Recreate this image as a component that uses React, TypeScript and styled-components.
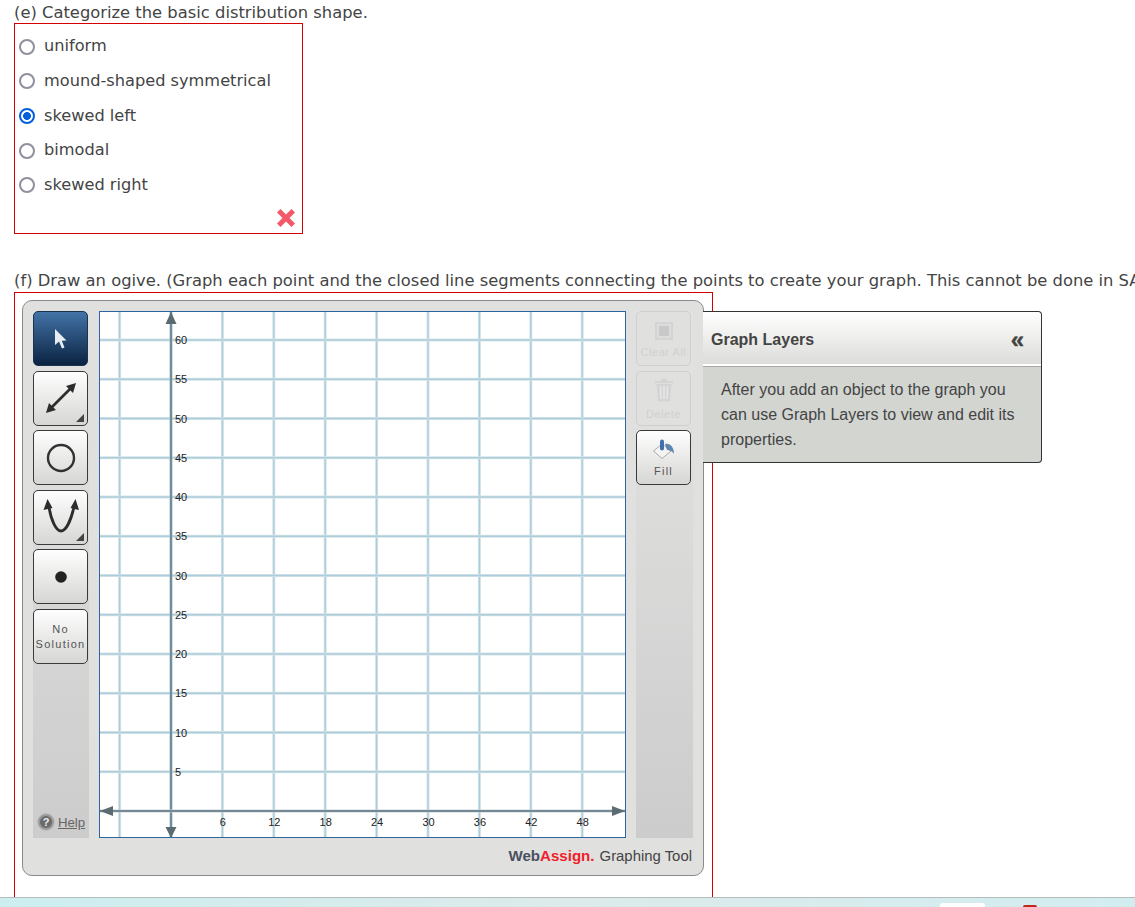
import React from 'react';
import styled, {createGlobalStyle} from 'styled-components';

const GlobalStyle = createGlobalStyle`
    html, body {
        margin: 0;
        padding: 0;
        height: 907px;
        overflow: hidden;
        background: #fff;
    }
`;

const Page = styled.div`
    width: 1135px;
    height: 907px;
    overflow: hidden;
    display: flex;
    flex-direction: column;
    font-family: 'DejaVu Sans', Verdana, sans-serif;
    color: #444;
`;

const Content = styled.div`
    flex: 1;
    min-height: 0;
    padding: 2px 0 0 14px;
    overflow: hidden;
`;

const Question = styled.div`
    font-size: 16.35px;
    line-height: 21px;
    white-space: nowrap;
`;

const ChoiceBox = styled.div`
    box-sizing: border-box;
    width: 289px;
    height: 211px;
    margin-bottom: 36px;
    border: 1px solid #d40000;
    padding: 4.3px 7px 7px 4px;
    display: flex;
    flex-direction: column;
`;

const Choice = styled.label`
    flex: none;
    height: 34.7px;
    display: flex;
    align-items: center;
    gap: 9px;
    font-size: 16.2px;
`;

const Radio = styled.input`
    appearance: none;
    flex: none;
    width: 16px;
    height: 16px;
    margin: 2px 0 0;
    border: 2px solid #8f8f9d;
    border-radius: 50%;
    background: #fff;

    &:checked {
        border-color: #0060df;
        background: radial-gradient(circle, #0060df 0 3.6px, #fff 4.2px);
    }
`;

const WrongMark = styled.svg`
    flex: none;
    align-self: flex-end;
    margin-top: 7px;
`;

const GraphBox = styled.div`
    box-sizing: border-box;
    width: 699px;
    height: 605px;
    margin-top: 1px;
    border: 1px solid #d40000;
    border-bottom: none;
    padding: 7px 0 0 7px;
    display: flex;
    align-items: flex-start;
`;

const Tool = styled.div`
    flex: none;
    box-sizing: border-box;
    width: 682px;
    height: 576px;
    border: 1px solid #8b8b8b;
    border-radius: 10px;
    background: #e0e0df;
    padding: 10px 10px 0;
`;

const ToolBody = styled.div`
    display: flex;
    gap: 10px;
`;

const SideColumn = styled.div<{$wide?: boolean}>`
    width: ${(props) => (props.$wide ? '57px' : '56px')};
    height: 527px;
    display: flex;
    flex-direction: column;
    gap: 4.6px;
    background: linear-gradient(#e2e2e1 0%, #e0e0df 20%, #cccccc 100%);
`;

const ToolButton = styled.div<{$active?: boolean; $off?: boolean; $top?: number}>`
    box-sizing: border-box;
    width: 55px;
    height: 55px;
    flex: none;
    position: relative;
    border-radius: 5px;
    border: 1px solid ${(props) => (props.$off ? '#cfcfcf' : props.$active ? '#1c3350' : '#3a3a3a')};
    background: ${(props) => (props.$off ? '#e0e0df' : props.$active ? 'linear-gradient(#4373a8, #0a2342)' : 'linear-gradient(#fefefe, #d6d6d4)')};
    padding-top: ${(props) => (props.$top === undefined ? 0 : `${props.$top}px`)};
    display: flex;
    flex-direction: column;
    align-items: center;
    justify-content: ${(props) => (props.$top === undefined ? 'center' : 'flex-start')};
    gap: ${(props) => (props.$top === undefined ? 0 : '5px')};
`;

const ButtonLabel = styled.div<{$off?: boolean}>`
    font-family: 'Liberation Sans', Arial, sans-serif;
    font-size: 11px;
    line-height: 15px;
    letter-spacing: ${(props) => (props.$off ? '0.55px' : '1.25px')};
    text-align: center;
    white-space: nowrap;
    color: ${(props) => (props.$off ? '#d0d0d0' : '#555')};
`;

const SolutionLabels = styled.div`
    margin-top: 2px;
`;

const Corner = styled.span`
    position: absolute;
    right: 3px;
    bottom: 3px;
    width: 0;
    height: 0;
    border-left: 8px solid transparent;
    border-bottom: 8px solid #444;
`;

const HelpRow = styled.div`
    margin-top: auto;
    height: 32px;
    padding-left: 4px;
    display: flex;
    align-items: center;
    gap: 3px;
    font-family: 'Liberation Sans', Arial, sans-serif;
    font-size: 13.2px;
    color: #666;
    text-decoration: underline;
`;

const Canvas = styled.div`
    box-sizing: border-box;
    width: 527px;
    height: 527px;
    border: 1px solid #2f659f;
    background: #fff;
`;

const Brand = styled.div`
    height: 35px;
    display: flex;
    justify-content: flex-end;
    align-items: center;
    padding-right: 1px;
    font-family: 'Liberation Sans', Arial, sans-serif;
    font-size: 14.9px;
    color: #444;
`;

const BrandName = styled.b`
    margin-right: 5px;
    font-size: 15.1px;
    color: #4a4f60;

    & > span {
        color: #f0202a;
    }
`;

const LayersPanel = styled.div`
    flex: none;
    position: relative;
    box-sizing: border-box;
    width: 339px;
    height: 152px;
    margin: 11px 0 0 -1px;
    border: 1px solid #333;
    border-left: none;
    border-radius: 0 4px 4px 0;
    background: #d3d5d1;
    font-family: 'Liberation Sans', Arial, sans-serif;
    color: #444;
`;

const LayersHeader = styled.div`
    box-sizing: border-box;
    height: 54px;
    padding: 3px 17px 0 8px;
    border-bottom: 2px solid #fff;
    border-radius: 0 4px 0 0;
    background: linear-gradient(#fff, #dcdcda);
    display: flex;
    align-items: center;
    justify-content: space-between;
    font-size: 16px;
    font-weight: bold;
`;

const Collapse = styled.span`
    font-size: 24px;
    line-height: 20px;
    font-weight: bold;
    color: #444;
    -webkit-text-stroke: 0.4px #444;
`;

const LayersText = styled.div`
    padding: 10px 20px 0 18px;
    font-size: 16px;
    line-height: 25px;
    border-top: 1px solid #a9aaa7;
`;

const BottomBar = styled.div`
    flex: none;
    height: 10px;
    box-sizing: border-box;
    border-top: 1px solid #b4bcbc;
    background: linear-gradient(90deg, #cdeef0, #dceaea 50%, #d2edf0);
    display: flex;
    align-items: flex-end;
    justify-content: flex-end;
    overflow: hidden;
`;

const BarTab = styled.div`
    width: 45px;
    height: 4px;
    margin-right: 38px;
    border-radius: 3px 3px 0 0;
    background: #fff;
`;

const BarDot = styled.div`
    width: 14px;
    height: 2px;
    margin-right: 98px;
    border-radius: 7px 7px 0 0;
    background: #c2261c;
`;

const choices = [
    {label: 'uniform'},
    {label: 'mound-shaped symmetrical'},
    {label: 'skewed left', checked: true},
    {label: 'bimodal'},
    {label: 'skewed right'},
];

const yLabels = [60, 55, 50, 45, 40, 35, 30, 25, 20, 15, 10, 5];
const xLabels = [6, 12, 18, 24, 30, 36, 42, 48];
const xStep = 51.4;
const yStep = 39.25;
const originX = 71;
const originY = 499;

const GridLine = ({x1, y1, x2, y2}: {x1: number; y1: number; x2: number; y2: number}) => (
    <g>
        <line x1={x1} y1={y1} x2={x2} y2={y2} stroke='#d6e5eb' strokeWidth={3}/>
        <line x1={x1} y1={y1} x2={x2} y2={y2} stroke='#aecdda' strokeWidth={1.4}/>
    </g>
);

const Plot = () => {
    const verticals = [-1, 1, 2, 3, 4, 5, 6, 7, 8].map((n) => originX + (n * xStep));
    const horizontals = yLabels.map((v) => originY - ((v / 5) * yStep));
    return (
        <svg width={525} height={525} style={{display: 'block'}} fontFamily='Liberation Sans, Arial, sans-serif' fontSize={11} fill='#222'>
            {verticals.map((x) => <GridLine key={x} x1={x} y1={0} x2={x} y2={525}/>)}
            {horizontals.map((y) => <GridLine key={y} x1={0} y1={y} x2={525} y2={y}/>)}
            <line x1={71} y1={0} x2={71} y2={525} stroke='#a9c2d0' strokeWidth={3}/>
            <line x1={71} y1={0} x2={71} y2={525} stroke='#62808f' strokeWidth={1.6}/>
            <line x1={0} y1={499} x2={525} y2={499} stroke='#c5d3da' strokeWidth={3}/>
            <line x1={0} y1={499} x2={525} y2={499} stroke='#5a6f7b' strokeWidth={1.4}/>
            <polygon points='71,0 76.5,12 65.5,12' fill='#5b6b72'/>
            <polygon points='71,526 76.5,515 65.5,515' fill='#5b6b72'/>
            <polygon points='0,499 13,494 13,504' fill='#5b6b72'/>
            <polygon points='525,499 512,494 512,504' fill='#5b6b72'/>
            {yLabels.map((v) => (
                <text key={v} x={75} y={originY - ((v / 5) * yStep) + 4}>{v}</text>
            ))}
            {xLabels.map((v) => (
                <text key={v} x={originX + ((v / 6) * xStep) + 0.5} y={513.5} textAnchor='middle'>{v}</text>
            ))}
        </svg>
    );
};

const App = () => {
    return (
        <Page>
            <GlobalStyle/>
            <Content>
                <Question>{'(e) Categorize the basic distribution shape.'}</Question>
                <ChoiceBox>
                    {choices.map((choice) => (
                        <Choice key={choice.label}>
                            <Radio type='radio' name='shape' defaultChecked={choice.checked}/>
                            {choice.label}
                        </Choice>
                    ))}
                    <WrongMark width={18} height={18} viewBox='0 0 18 18'>
                        <path d='M3.5 3.5L14.5 14.5M14.5 3.5L3.5 14.5' stroke='#f4596a' strokeWidth={5} strokeLinecap='square'/>
                    </WrongMark>
                </ChoiceBox>
                <Question>{'(f) Draw an ogive. (Graph each point and the closed line segments connecting the points to create your graph. This cannot be done in SALT.)'}</Question>
                <GraphBox>
                    <Tool>
                        <ToolBody>
                            <SideColumn>
                                <ToolButton $active>
                                    <svg width={16} height={22} viewBox='0 0 16 22'>
                                        <path d='M2 1L2 17L6 13.5L9 20.5L11.5 19.5L8.8 12.8L13.5 12.5Z' fill='#e8edf3'/>
                                    </svg>
                                </ToolButton>
                                <ToolButton>
                                    <svg width={34} height={34} viewBox='0 0 34 34'>
                                        <path d='M8 26L26 8' stroke='#2d2d2d' strokeWidth={2.6}/>
                                        <path d='M2 32L5 22L12 29ZM32 2L29 12L22 5Z' fill='#2d2d2d'/>
                                    </svg>
                                    <Corner/>
                                </ToolButton>
                                <ToolButton>
                                    <svg width={32} height={32} viewBox='0 0 32 32'>
                                        <circle cx={16} cy={16} r={13} fill='none' stroke='#333' strokeWidth={2.4}/>
                                    </svg>
                                </ToolButton>
                                <ToolButton>
                                    <svg width={36} height={38} viewBox='0 0 36 38'>
                                        <path d='M6 9C8 22 13 33 18 33C23 33 28 22 31 9' fill='none' stroke='#2d2d2d' strokeWidth={2.8}/>
                                        <path d='M4.5 1L0.5 12L9.5 10ZM32.5 1L27.5 10L36 12Z' fill='#2d2d2d'/>
                                    </svg>
                                    <Corner/>
                                </ToolButton>
                                <ToolButton>
                                    <svg width={12} height={12} viewBox='0 0 12 12'>
                                        <circle cx={6} cy={6} r={5.8} fill='#222'/>
                                    </svg>
                                </ToolButton>
                                <ToolButton>
                                    <SolutionLabels>
                                        <ButtonLabel>{'No'}</ButtonLabel>
                                        <ButtonLabel>{'Solution'}</ButtonLabel>
                                    </SolutionLabels>
                                </ToolButton>
                                <HelpRow>
                                    <svg width={18} height={18} viewBox='0 0 18 18'>
                                        <circle cx={9} cy={9} r={8.4} fill='#9a9a9a' stroke='#bdbdbd'/>
                                        <circle cx={9} cy={9} r={6} fill='#6b6b6b'/>
                                        <text x={9} y={13} fontSize={11} fontWeight='bold' fill='#eee' textAnchor='middle' fontFamily='Liberation Sans, Arial, sans-serif'>{'?'}</text>
                                    </svg>
                                    {'Help'}
                                </HelpRow>
                            </SideColumn>
                            <Canvas><Plot/></Canvas>
                            <SideColumn $wide>
                                <ToolButton $off $top={10}>
                                    <svg width={18} height={18} viewBox='0 0 18 18'>
                                        <rect x={1} y={1} width={16} height={16} fill='#dcdcdc' stroke='#d4d4d4' strokeWidth={2}/>
                                        <rect x={4} y={4} width={10} height={10} fill='#c9c9c9'/>
                                    </svg>
                                    <ButtonLabel $off>{'Clear All'}</ButtonLabel>
                                </ToolButton>
                                <ToolButton $off $top={6}>
                                    <svg width={20} height={24} viewBox='0 0 20 24'>
                                        <path d='M1 3H19V5H1ZM7 0.5H13V3H7ZM2.5 6H17.5L16 23.5H4Z' fill='#d4d4d4'/>
                                        <path d='M6.5 8L7 21M10 8V21M13.5 8L13 21' stroke='#e6e6e6' strokeWidth={1.5}/>
                                    </svg>
                                    <ButtonLabel $off>{'Delete'}</ButtonLabel>
                                </ToolButton>
                                <ToolButton $top={8}>
                                    <svg width={22} height={20} viewBox='0 0 22 20'>
                                        <path d='M0.5 12L9 5L18 12L9 19.5Z' fill='#f4f4f4' stroke='#a8a8a8'/>
                                        <rect x={7} y={0.5} width={4} height={11} rx={2} fill='#3f6fb0'/>
                                        <path d='M12 5C17 4 21 8 21 15C19 12 17 11 14 11Z' fill='#5c86ad'/>
                                    </svg>
                                    <ButtonLabel>{'Fill'}</ButtonLabel>
                                </ToolButton>
                            </SideColumn>
                        </ToolBody>
                        <Brand>
                            <BrandName>{'Web'}<span>{'Assign.'}</span></BrandName>
                            {'Graphing Tool'}
                        </Brand>
                    </Tool>
                    <LayersPanel>
                        <LayersHeader>
                            {'Graph Layers'}
                            <Collapse>{'«'}</Collapse>
                        </LayersHeader>
                        <LayersText>
                            {'After you add an object to the graph you can use Graph Layers to view and edit its properties.'}
                        </LayersText>
                    </LayersPanel>
                </GraphBox>
            </Content>
            <BottomBar>
                <BarTab/>
                <BarDot/>
            </BottomBar>
        </Page>
    );
};

export default App;
